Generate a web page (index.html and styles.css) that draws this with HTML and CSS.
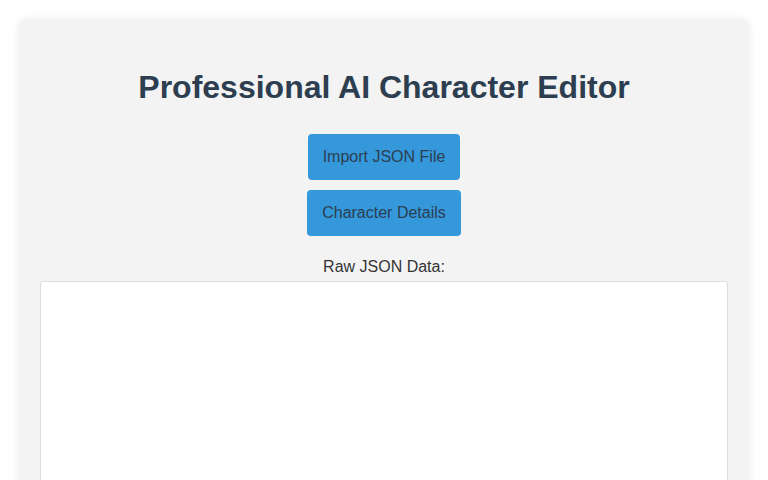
FILE: index.html
```html
<!DOCTYPE html>
<html>
<head>
<meta charset="utf-8">
<link rel="stylesheet" href="styles.css">
</head>
<body>
<div class="container">
  <h1 class="title">Professional AI Character Editor</h1>
  <div class="actions">
    <button class="btn">Import JSON File</button>
    <button class="btn">Character Details</button>
  </div>
  <label class="label" for="raw">Raw JSON Data:</label>
  <textarea id="raw" class="raw"></textarea>
</div>
</body>
</html>
```
FILE: styles.css
```css
html, body {
  margin: 0;
  padding: 0;
  background: #ffffff;
  font-family: "Liberation Sans", Arial, sans-serif;
}
.container {
  margin: 20px;
  padding: 28px 20px 20px;
  background: #f3f3f3;
  border-radius: 5px;
  box-shadow: 0 0 10px rgba(0, 0, 0, 0.1);
}
.title {
  margin: 21px 0 28px;
  text-align: center;
  font-size: 32px;
  font-weight: bold;
  color: #2c3e50;
}
.actions {
  display: flex;
  flex-direction: column;
  align-items: center;
  gap: 10px;
}
.btn {
  font-family: "Liberation Sans", Arial, sans-serif;
  font-size: 16px;
  color: #2c3e50;
  background: #3498db;
  border: none;
  border-radius: 4px;
  padding: 14px 15px;
}
.label {
  display: block;
  margin-top: 22px;
  text-align: center;
  font-size: 16px;
  color: #333333;
}
.raw {
  display: block;
  box-sizing: border-box;
  width: 100%;
  height: 400px;
  margin-top: 5px;
  border: 1px solid #dddddd;
  border-radius: 3px;
  background: #ffffff;
}
```
